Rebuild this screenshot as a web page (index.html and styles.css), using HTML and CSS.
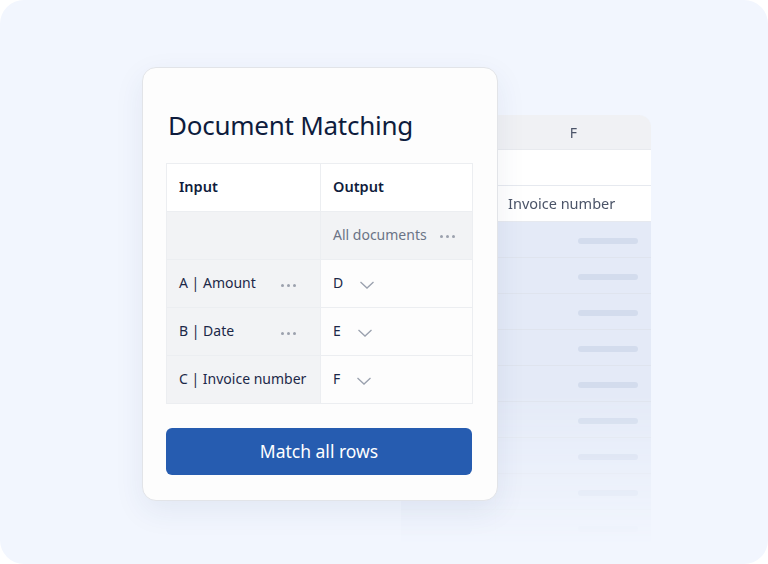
FILE: index.html
```html
<!DOCTYPE html>
<html>
<head>
<meta charset="utf-8">
<link rel="stylesheet" href="styles.css">
</head>
<body>
<div class="frame">
  <div class="sheet">
    <div class="sheet-col sheet-col-a">
      <div class="s-head"></div>
      <div class="s-row s-white"></div>
      <div class="s-row s-white"></div>
      <div class="s-row s-blue"></div>
      <div class="s-row s-blue"></div>
      <div class="s-row s-blue"></div>
      <div class="s-row s-blue"></div>
      <div class="s-row s-blue"></div>
      <div class="s-row s-blue"></div>
      <div class="s-row s-blue"></div>
      <div class="s-row s-blue"></div>
      <div class="s-row s-blue"></div>
    </div>
    <div class="sheet-col sheet-col-f">
      <div class="s-head">F</div>
      <div class="s-row s-white"></div>
      <div class="s-row s-white s-label">Invoice number</div>
      <div class="s-row s-blue"><span class="bar"></span></div>
      <div class="s-row s-blue"><span class="bar"></span></div>
      <div class="s-row s-blue"><span class="bar"></span></div>
      <div class="s-row s-blue"><span class="bar"></span></div>
      <div class="s-row s-blue"><span class="bar"></span></div>
      <div class="s-row s-blue"><span class="bar"></span></div>
      <div class="s-row s-blue"><span class="bar"></span></div>
      <div class="s-row s-blue"><span class="bar"></span></div>
      <div class="s-row s-blue"><span class="bar"></span></div>
    </div>
  </div>

  <div class="card">
    <h1 class="title">Document Matching</h1>
    <div class="table">
      <div class="cell head">Input</div>
      <div class="cell head">Output</div>

      <div class="cell in"></div>
      <div class="cell in muted">All documents <span class="dots"><i></i><i></i><i></i></span></div>

      <div class="cell in">A | Amount <span class="dots"><i></i><i></i><i></i></span></div>
      <div class="cell out">D <svg class="chev" width="16" height="10" viewBox="0 0 16 10"><path d="M1.5 2 L8 8 L14.5 2" fill="none" stroke="#9aa1ae" stroke-width="1.3"/></svg></div>

      <div class="cell in">B | Date <span class="dots"><i></i><i></i><i></i></span></div>
      <div class="cell out">E <svg class="chev" width="16" height="10" viewBox="0 0 16 10"><path d="M1.5 2 L8 8 L14.5 2" fill="none" stroke="#9aa1ae" stroke-width="1.3"/></svg></div>

      <div class="cell in">C | Invoice number</div>
      <div class="cell out">F <svg class="chev" width="16" height="10" viewBox="0 0 16 10"><path d="M1.5 2 L8 8 L14.5 2" fill="none" stroke="#9aa1ae" stroke-width="1.3"/></svg></div>
    </div>
    <button class="btn">Match all rows</button>
  </div>
</div>
</body>
</html>
```
FILE: styles.css
```css
html, body {
  margin: 0;
  padding: 0;
  background: #ffffff;
}
body {
  font-family: "Noto Sans", "Open Sans", "Liberation Sans", sans-serif;
}
.frame {
  position: relative;
  width: 768px;
  height: 564px;
  background: #f2f6fe;
  border-radius: 24px;
  overflow: hidden;
  padding: 67px 0 0 142px;
  box-sizing: border-box;
}
.sheet {
  position: absolute;
  left: 401px;
  top: 115px;
  width: 250px;
  height: 430px;
  display: flex;
  border-top-right-radius: 12px;
  overflow: hidden;
  -webkit-mask-image: linear-gradient(to bottom, #000 0, #000 280px, rgba(0,0,0,0) 430px);
  mask-image: linear-gradient(to bottom, #000 0, #000 280px, rgba(0,0,0,0) 430px);
  box-shadow: 0 0 0 1px #e6e9ef;
}
.sheet-col {
  display: flex;
  flex-direction: column;
}
.sheet-col-a {
  width: 94px;
  border-right: 1px solid #e4e8f0;
}
.sheet-col-f {
  flex: 1;
}
.s-head {
  height: 35px;
  flex-shrink: 0;
  background: #f0f1f4;
  border-bottom: 1px solid #e8eaee;
  box-sizing: border-box;
  font-size: 14px;
  color: #4b5468;
  display: flex;
  align-items: center;
  justify-content: center;
  padding-top: 1px;
}
.s-row {
  height: 36px;
  box-sizing: border-box;
  border-bottom: 1px solid #e6e9ef;
  display: flex;
  align-items: center;
  flex-shrink: 0;
}
.s-white {
  background: #ffffff;
}
.s-blue {
  background: #e4eaf7;
  border-bottom-color: #dfe4ee;
  justify-content: flex-end;
  padding-right: 13px;
}
.s-label {
  padding-left: 12px;
  font-size: 14.5px;
  color: #4b5468;
  padding-bottom: 2px;
}
.bar {
  width: 60px;
  height: 6px;
  border-radius: 3px;
  background: #d3dced;
  margin-top: 3px;
}
.card {
  position: relative;
  width: 356px;
  height: 434px;
  box-sizing: border-box;
  background: #fdfdfd;
  border: 1px solid #e2e4e8;
  border-radius: 14px;
  box-shadow: 0 10px 30px rgba(40, 60, 110, 0.08);
  padding: 0 24px 0 23px;
  display: flex;
  flex-direction: column;
}
.title {
  margin: 39px 0 0 2px;
  font-weight: 400;
  font-size: 26px;
  line-height: 36px;
  color: #0e1c3d;
  letter-spacing: -0.25px;
}
.table {
  margin-top: 20px;
  display: grid;
  grid-template-columns: 153px 151px;
  grid-auto-rows: 47px;
  border: 1px solid #eceef1;
  background: #eceef1;
  gap: 1px;
  width: 307px;
  box-sizing: border-box;
}
.cell {
  display: flex;
  align-items: center;
  padding-left: 12px;
  padding-bottom: 3px;
  font-size: 14px;
  color: #1c2848;
  box-sizing: border-box;
}
.head {
  background: #ffffff;
  font-weight: 600;
  font-size: 14.5px;
  color: #0f1c3c;
}
.in {
  background: #f2f3f5;
}
.out {
  background: #fdfdfd;
}
.muted {
  color: #6b7386;
  font-size: 14px;
}
.dots {
  display: flex;
  gap: 3px;
  margin-left: auto;
  margin-right: 24px;
  margin-top: 6px;
}
.muted .dots {
  margin-left: 13px;
  margin-right: 0;
  margin-top: 4px;
}
.dots i {
  width: 3px;
  height: 3px;
  border-radius: 50%;
  background: #9ba1ad;
  display: block;
}
.chev {
  margin-left: 16px;
  margin-top: 6px;
}
.btn {
  margin-top: 24px;
  width: 306px;
  height: 47px;
  border: none;
  border-radius: 6px;
  background: #265cb0;
  color: #ffffff;
  font-family: inherit;
  font-size: 17.5px;
  padding: 0 0 2px 0;
}
```
